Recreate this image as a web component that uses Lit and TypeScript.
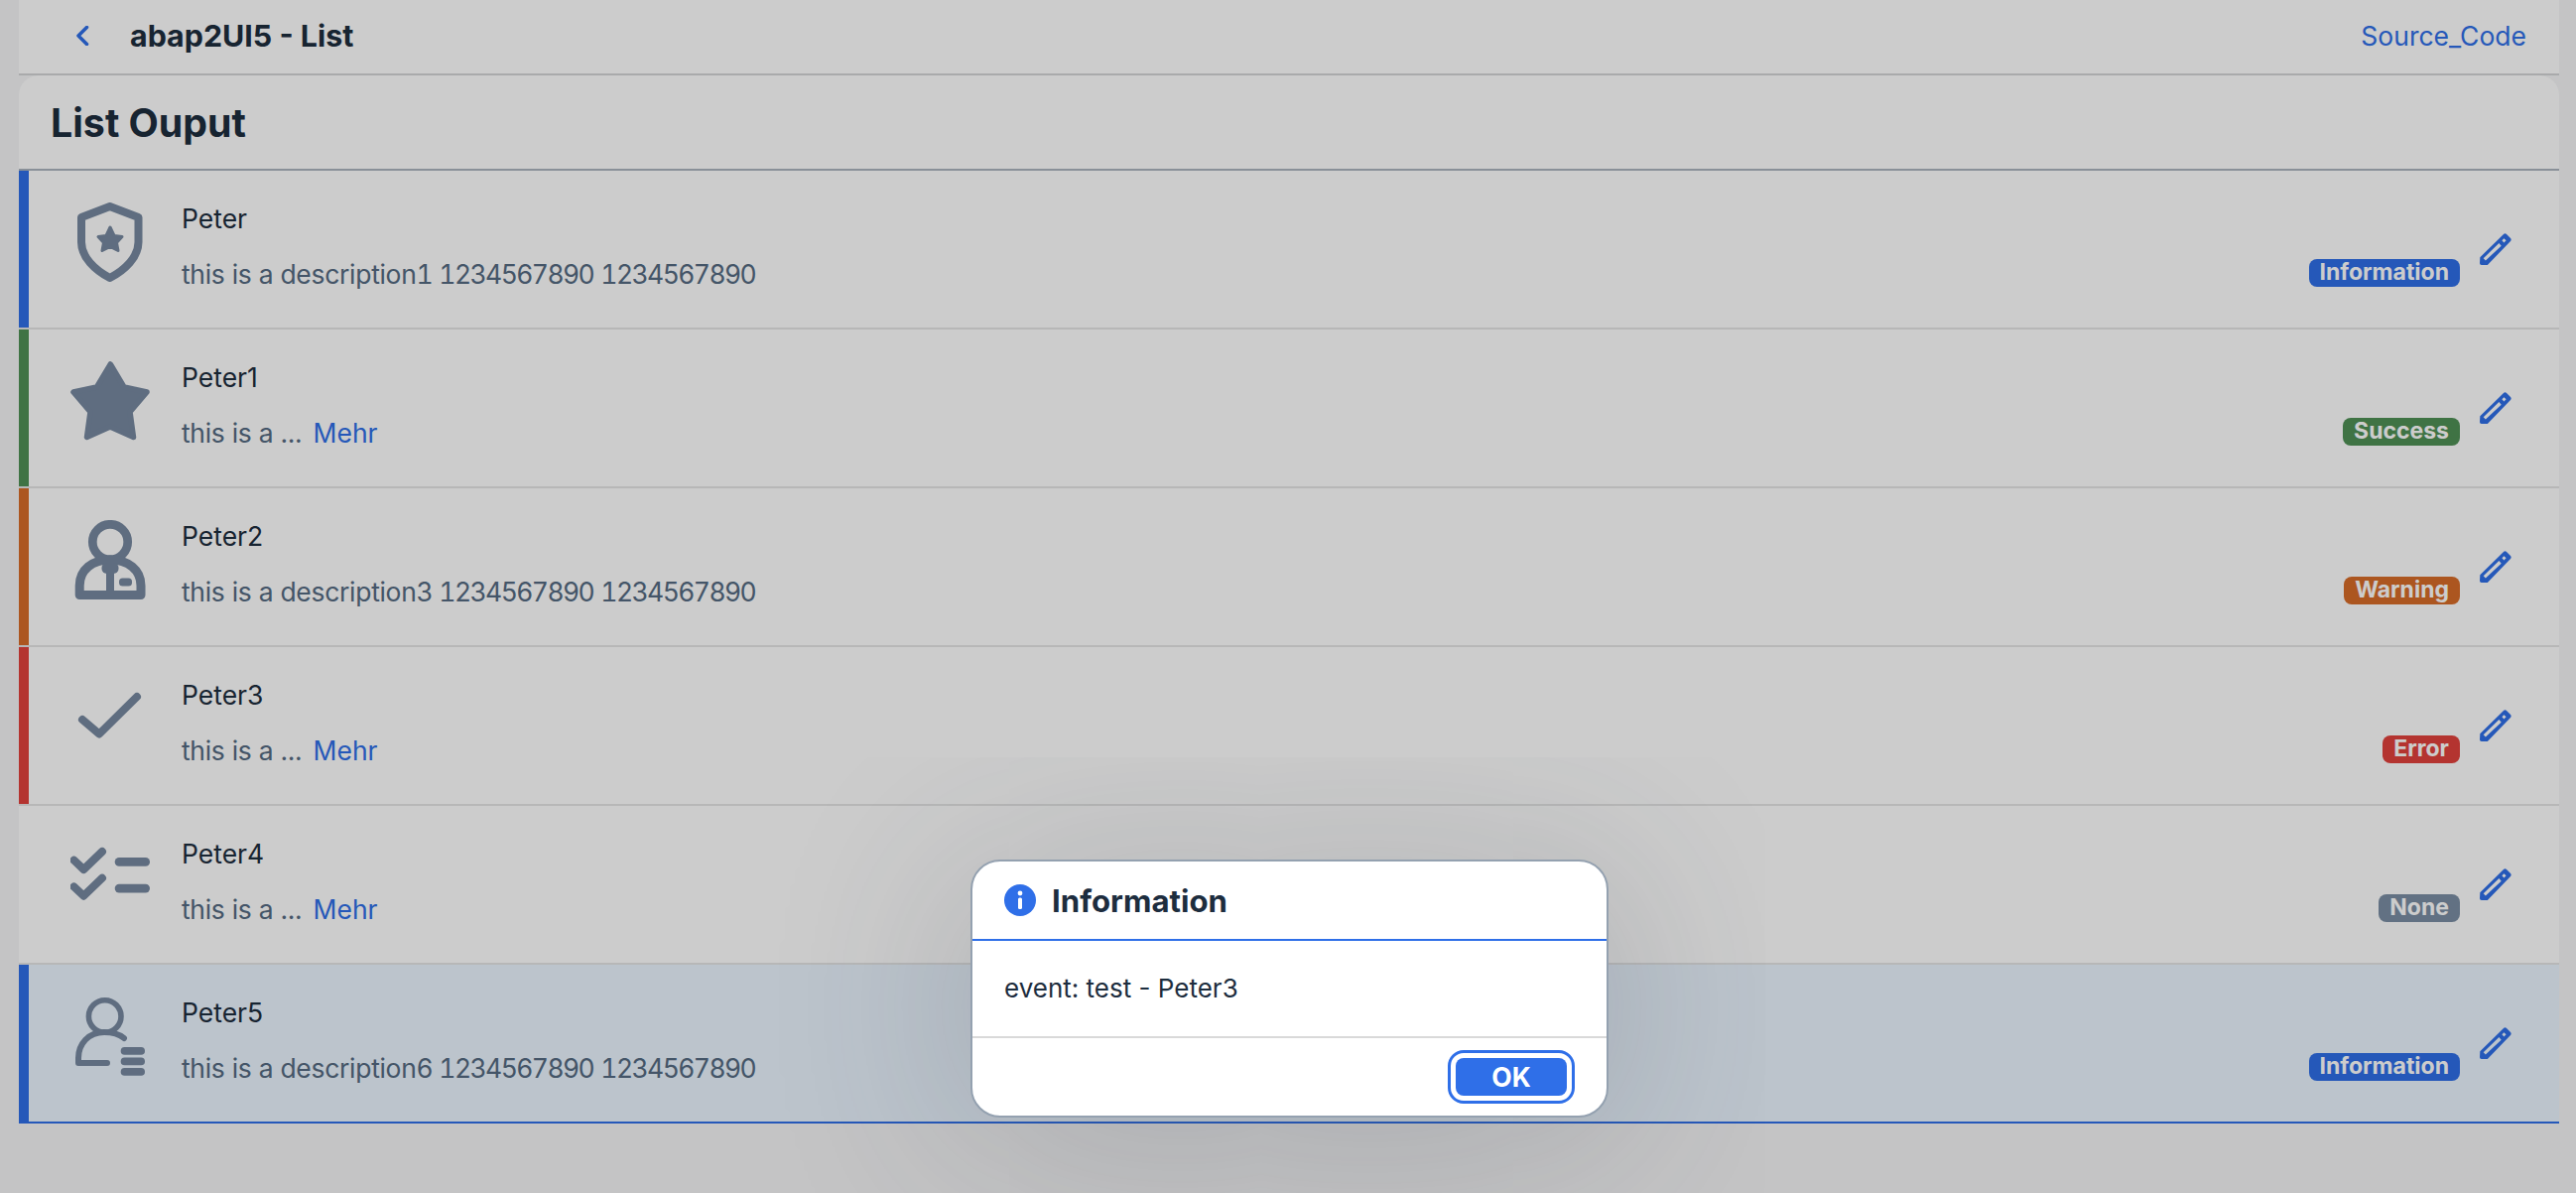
import { LitElement, html, css, svg } from "lit";
import { customElement } from "lit/decorators.js";

const icons: Record<string, unknown> = {
  shield: svg`<path d="M39.7 4 L68.5 15 V40 C68.5 55 55 68 39.7 76 C24.5 68 11 55 11 40 V15 Z" fill="none" stroke="currentColor" stroke-width="8" stroke-linejoin="round"/>
    <polygon points="40,25 44,33.5 52,34.5 46.5,40.5 48,48.5 40,44.5 32,48.5 33.5,40.5 28,34.5 36,33.5" fill="currentColor" stroke="currentColor" stroke-width="3" stroke-linejoin="round"/>`,
  star: svg`<polygon points="40.3,3 54,26 77,31 60,51 63.5,76.5 40,66 16.5,76.5 20,51 3,31 26.5,26" fill="currentColor" stroke="currentColor" stroke-width="5.5" stroke-linejoin="round"/>`,
  doctor: svg`<circle cx="40" cy="22" r="17.7" fill="none" stroke="currentColor" stroke-width="8.7"/>
    <path d="M9.2 75.5V66C9.2 50 22 40 40 40S71 50 71 66V75.5Z" fill="none" stroke="currentColor" stroke-width="9" stroke-linejoin="round"/>
    <rect x="36" y="46" width="8" height="30" fill="currentColor"/>
    <rect x="31.5" y="43" width="17" height="11" rx="5" fill="currentColor"/>
    <rect x="49" y="58.5" width="13" height="8" rx="3.5" fill="currentColor"/>`,
  check: svg`<path d="M12 41 L29 55.5 L67 18" fill="none" stroke="currentColor" stroke-width="8" stroke-linecap="round" stroke-linejoin="round"/>`,
  tasks: svg`<path d="M3.5 22.7 L13.3 32 L32 14 M3.5 49.4 L13.3 58.7 L32 40.7" fill="none" stroke="currentColor" stroke-width="8" stroke-linecap="round" stroke-linejoin="round"/>
    <rect x="44.7" y="20" width="35.3" height="8.7" rx="4.3" fill="currentColor"/>
    <rect x="44.7" y="46.7" width="35.3" height="8.7" rx="4.3" fill="currentColor"/>`,
  person: svg`<circle cx="34.7" cy="20" r="16.3" fill="none" stroke="currentColor" stroke-width="5.6"/>
    <path d="M54 42 C48 37 41 36 34 36 C18 36 8 48 8 62 V67 H37" fill="none" stroke="currentColor" stroke-width="6" stroke-linecap="round" stroke-linejoin="round"/>
    <rect x="50.7" y="51" width="24.3" height="7.7" rx="3.8" fill="currentColor"/>
    <rect x="50.7" y="61.5" width="24.3" height="7.7" rx="3.8" fill="currentColor"/>
    <rect x="50.7" y="72" width="24.3" height="7.7" rx="3.8" fill="currentColor"/>`,
};

type Row = { title: string; desc: string; more?: boolean; icon: string; state: string; label: string; selected?: boolean };

const rows: Row[] = [
  { title: "Peter", desc: "this is a description1 1234567890 1234567890", icon: "shield", state: "info", label: "Information" },
  { title: "Peter1", desc: "this is a ...", more: true, icon: "star", state: "ok", label: "Success" },
  { title: "Peter2", desc: "this is a description3 1234567890 1234567890", icon: "doctor", state: "warn", label: "Warning" },
  { title: "Peter3", desc: "this is a ...", more: true, icon: "check", state: "err", label: "Error" },
  { title: "Peter4", desc: "this is a ...", more: true, icon: "tasks", state: "none", label: "None" },
  { title: "Peter5", desc: "this is a description6 1234567890 1234567890", icon: "person", state: "info", label: "Information", selected: true },
];

@customElement("app-root")
export class AppRoot extends LitElement {
  static styles = css`
    :host {
      display: block;
      position: relative;
      height: 1202px;
      overflow: hidden;
      background: #f5f6f7;
      font-family: Inter, "Liberation Sans", sans-serif;
      font-size: 26.5px;
      color: #1d2d3e;
    }
    .page { padding: 0 17px 0 19px; }
    .header {
      border-bottom: 2px solid #d4d5d6;
      background: #fff;
      display: flex;
      align-items: center;
      padding-bottom: 3px;
      height: 71px;
    }
    .back { width: 112px; display: flex; justify-content: flex-start; padding-left: 57px; box-sizing: border-box; color: #2f6fe8; }
    .back svg { display: block; }
    .app-title { font-size: 30.4px; font-weight: 700; flex: 1; }
    .source { color: #2f6fe8; padding-right: 33px; }
    .card { background: #fff; border-radius: 20px 20px 0 0; }
    .card-title {
      height: 96px;
      box-sizing: border-box;
      border-bottom: 2px solid #acb5bf;
      padding-left: 32px;
      font-size: 39.3px;
      font-weight: 700;
      line-height: 96px;
    }
    .row {
      display: flex;
      height: 160px;
      box-sizing: border-box;
      border-bottom: 2px solid #e5e5e5;
    }
    .row.selected { background: #ebf5ff; border-bottom-color: #2f6fe8; }
    .bar { width: 10px; flex: none; }
    .bar.info { background: #2f6fe8; }
    .bar.ok { background: #4f9056; }
    .bar.warn { background: #d86c28; }
    .bar.err { background: #e2423d; }
    .row-icon { width: 80px; height: 80px; margin: 32px 32px 0 42px; flex: none; color: #7789a0; }
    .row-icon svg { display: block; }
    .text { flex: 1; min-width: 0; padding-top: 32px; }
    .name { line-height: 32px; height: 56px; }
    .desc { color: #556b82; line-height: 32px; letter-spacing: -0.3px; }
    .desc a { color: #2f6fe8; text-decoration: none; letter-spacing: 0; margin-left: 4px; }
    .num { font-variant-numeric: tabular-nums; letter-spacing: -1.6px; }
    .badge {
      align-self: flex-start;
      margin-top: 89px;
      height: 28px;
      padding: 0 11px;
      border-radius: 8px;
      color: #fff;
      font-size: 23px;
      font-weight: 700;
      line-height: 27px;
      box-sizing: border-box;
    }
    .badge.info { background: #2f6fe8; }
    .badge.ok { background: #4f9056; }
    .badge.warn { background: #d86c28; }
    .badge.err { background: #e2423d; }
    .badge.none { background: #7b8ea4; }
    .edit { width: 32px; height: 32px; margin: 63px 48px 0 20px; flex: none; color: #2f6fe8; }
    .edit svg { display: block; }
    .block { position: absolute; inset: 0; background: rgba(0, 0, 0, 0.2); }
    .dialog {
      position: absolute;
      left: 978px;
      top: 866px;
      width: 643px;
      height: 260px;
      box-sizing: border-box;
      background: #fff;
      border: 2px solid #94a1b0;
      border-radius: 30px;
      box-shadow: 0 20px 200px rgba(50, 60, 75, 0.22);
      display: flex;
      flex-direction: column;
    }
    .d-head {
      height: 80px;
      flex: none;
      box-sizing: border-box;
      border-bottom: 2px solid #2f6fe8;
      display: flex;
      align-items: center;
      gap: 16px;
      padding-left: 32px;
      font-size: 31.2px;
      font-weight: 700;
    }
    .d-head svg { display: block; }
    .d-head span { padding-top: 2px; }
    .d-body {
      height: 98px;
      flex: none;
      box-sizing: border-box;
      padding: 28px 32px 0;
      font-size: 26px;
      line-height: 40px;
      border-bottom: 2px solid #d9d9d9;
    }
    .d-foot { flex: 1; display: flex; align-items: center; justify-content: flex-end; padding-right: 32px; box-sizing: border-box; }
    .ok-btn {
      width: 112px;
      height: 38px;
      background: #2f6fe8;
      border-radius: 8px;
      color: #fff;
      font-weight: 700;
      text-align: center;
      line-height: 38px;
      outline: 3px solid #2f6fe8;
      outline-offset: 5px;
      margin-right: 8px;
    }
  `;

  private pencil() {
    return html`<svg width="32" height="32" viewBox="0 0 32 32">
      <path fill-rule="evenodd" fill="currentColor" d="M0.3 24.2 L24 1 Q25.5 -0.3 27 1 L31 5 Q32.3 6.5 31 8 L8.3 31.5 Q8 32 7 32 H1.8 Q0 32 0 30.2 Z M3.7 25.2 L5.9 27.6 L21.7 12.7 L19.4 10.1 Z M24.4 5.2 L22.4 7.3 L24.4 9.4 L26.6 7.3 Z"/>
    </svg>`;
  }

  private descText(text: string) {
    return text.split(/(\d+)/).map((part) => (/^\d+$/.test(part) ? html`<span class="num">${part}</span>` : part));
  }

  render() {
    return html`
      <div class="page">
        <div class="header">
          <div class="back">
            <svg width="14" height="20" viewBox="0 0 14 20"><path d="M11.5 1.5 L3 10 L11.5 18.5" fill="none" stroke="currentColor" stroke-width="3.5" stroke-linecap="round" stroke-linejoin="round"/></svg>
          </div>
          <div class="app-title">abap2UI5 - List</div>
          <div class="source">Source_Code</div>
        </div>
        <div class="card">
          <div class="card-title">List Ouput</div>
          ${rows.map(
            (r) => html`
              <div class="row ${r.selected ? "selected" : ""}">
                <div class="bar ${r.state}"></div>
                <div class="row-icon"><svg width="80" height="80" viewBox="0 0 80 80">${icons[r.icon]}</svg></div>
                <div class="text">
                  <div class="name">${r.title}</div>
                  <div class="desc">${this.descText(r.desc)}${r.more ? html` <a>Mehr</a>` : ""}</div>
                </div>
                <div class="badge ${r.state}">${r.label}</div>
                <div class="edit">${this.pencil()}</div>
              </div>
            `
          )}
        </div>
      </div>
      <div class="block"></div>
      <div class="dialog">
        <div class="d-head">
          <svg width="32" height="32" viewBox="0 0 32 32">
            <circle cx="16" cy="16" r="16" fill="#2f6fe8"/>
            <circle cx="16" cy="9" r="2.4" fill="#fff"/>
            <rect x="14" y="13.5" width="4" height="11.5" rx="1.5" fill="#fff"/>
          </svg>
          <span>Information</span>
        </div>
        <div class="d-body">event: test - Peter3</div>
        <div class="d-foot"><div class="ok-btn">OK</div></div>
      </div>
    `;
  }
}
